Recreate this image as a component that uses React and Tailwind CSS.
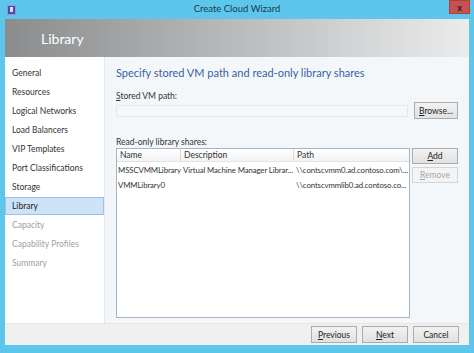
export default function App() {
  const font = { fontFamily: 'Lato, "Noto Sans", sans-serif' };
  const navItems = [
    ["General", false],
    ["Resources", false],
    ["Logical Networks", false],
    ["Load Balancers", false],
    ["VIP Templates", false],
    ["Port Classifications", false],
    ["Storage", false],
    ["Library", false, true],
    ["Capacity", true],
    ["Capability Profiles", true],
    ["Summary", true],
  ];
  const btn =
    "border border-[#acacac] bg-gradient-to-b from-[#f2f2f2] to-[#e1e1e1] text-[8.5px] leading-[10px] text-[#222] flex items-center justify-center";
  return (
    <div className="w-[474px] h-[353px] bg-[#5cc7ea] flex flex-col overflow-hidden" style={font}>
      {/* title bar */}
      <div className="h-[19px] flex items-center relative shrink-0">
        <div className="ml-[7px] w-[9px] h-[10px] bg-[#4a4fa8] border border-[#8f93d8] flex items-center justify-center">
          <div className="w-[3px] h-[5px] bg-[#d8dcff]" />
        </div>
        <div className="absolute inset-x-0 top-0 h-[18px] flex items-center justify-center text-[9.5px] text-[#1d3a50]">
          Create Cloud Wizard
        </div>
        <div className="absolute right-[4px] top-0 w-[21px] h-[14px] bg-[#c75050] border border-[#b04040] flex items-center justify-center text-[9px] font-bold text-[#222] leading-none">
          x
        </div>
      </div>
      {/* body */}
      <div className="mx-[5px] h-[326px] shrink-0 flex flex-col bg-white">
        <div className="h-[38px] shrink-0 bg-gradient-to-r from-[#8a8c8e] via-[#b9bbbd] to-[#ececec] flex items-center pl-[36px] text-[14px] text-white">
          Library
        </div>
        <div className="flex h-[266px] shrink-0 overflow-hidden">
          <div className="w-[100px] shrink-0 bg-white pt-[7px] flex flex-col border-r border-[#e4e8ec]">
            {navItems.map(([label, dim, sel]) => (
              <div
                key={label}
                className={
                  "h-[18px] mb-[1px] flex items-center pl-[6px] text-[8.5px] whitespace-nowrap " +
                  (sel
                    ? "bg-[#cde3f8] border border-[#9dc2e8] text-[#222]"
                    : dim
                    ? "text-[#a0a0a0] border border-transparent"
                    : "text-[#333] border border-transparent")
                }
              >
                {label}
              </div>
            ))}
          </div>
          <div className="flex-1 bg-[#f4f7fa] pl-[11px] pr-[11px] pt-[7px] flex flex-col">
            <div className="text-[11px] text-[#3b5ea4] leading-[18px] whitespace-nowrap">
              Specify stored VM path and read-only library shares
            </div>
            <div className="mt-[8px] text-[8.5px] text-[#333] leading-[12px]">
              <span className="underline">S</span>tored VM path:
            </div>
            <div className="flex items-center gap-[6px] h-[17px]">
              <div className="w-[292px] h-[12px] border border-[#e6e9ec] bg-[#f6f7f8]" />
              <div className={btn + " w-[44px] h-[17px]"}>
                <span><span className="underline">B</span>rowse...</span>
              </div>
            </div>
            <div className="mt-[18px] text-[8.5px] text-[#333] leading-[11px]">Read-only library shares:</div>
            <div className="flex gap-[2px]">
              <div className="w-[294px] h-[170px] border border-[#a9b4c2] bg-white flex flex-col">
                <div className="h-[13px] flex text-[8.5px] text-[#333] bg-gradient-to-b from-white to-[#f3f3f3] border-b border-[#e3e3e3] leading-none">
                  <div className="w-[64px] border-r border-[#d8d8d8] pl-[3px] flex items-center">Name</div>
                  <div className="w-[113px] border-r border-[#d8d8d8] pl-[3px] flex items-center">Description</div>
                  <div className="flex-1 pl-[3px] flex items-center">Path</div>
                </div>
                {[
                  ["MSSCVMMLibrary", "Virtual Machine Manager Librar...", "\\\\contscvmm0.ad.contoso.com\\..."],
                  ["VMMLibrary0", "", "\\\\contscvmmlib0.ad.contoso.co..."],
                ].map((r) => (
                  <div key={r[0]} className="h-[15px] flex text-[7.8px] tracking-[-0.1px] leading-[10px] text-[#333] items-center whitespace-nowrap">
                    <div className="w-[64px] pl-[1px]">{r[0]}</div>
                    <div className="w-[113px] pl-[2px]">{r[1]}</div>
                    <div className="flex-1 pl-[2px]">{r[2]}</div>
                  </div>
                ))}
              </div>
              <div className="flex flex-col gap-[3px]">
                <div className={btn + " w-[46px] h-[16px] border-[#707070]"}>
                  <span><span className="underline">A</span>dd</span>
                </div>
                <div className="w-[46px] h-[16px] border border-[#d5d5d5] bg-[#f4f4f4] text-[8.5px] leading-[10px] text-[#a8a8a8] flex items-center justify-center">
                  <span><span className="underline">R</span>emove</span>
                </div>
              </div>
            </div>
          </div>
        </div>
        <div className="h-[22px] shrink-0 bg-[#f0f0f0] flex items-center justify-end gap-[5px] pr-[10px] border-t border-[#e6e6e6]">
          <div className={btn + " w-[46px] h-[17px]"}>
            <span><span className="underline">P</span>revious</span>
          </div>
          <div className={btn + " w-[46px] h-[17px]"}>
            <span><span className="underline">N</span>ext</span>
          </div>
          <div className={btn + " w-[46px] h-[17px]"}>Cancel</div>
        </div>
      </div>
    </div>
  );
}
